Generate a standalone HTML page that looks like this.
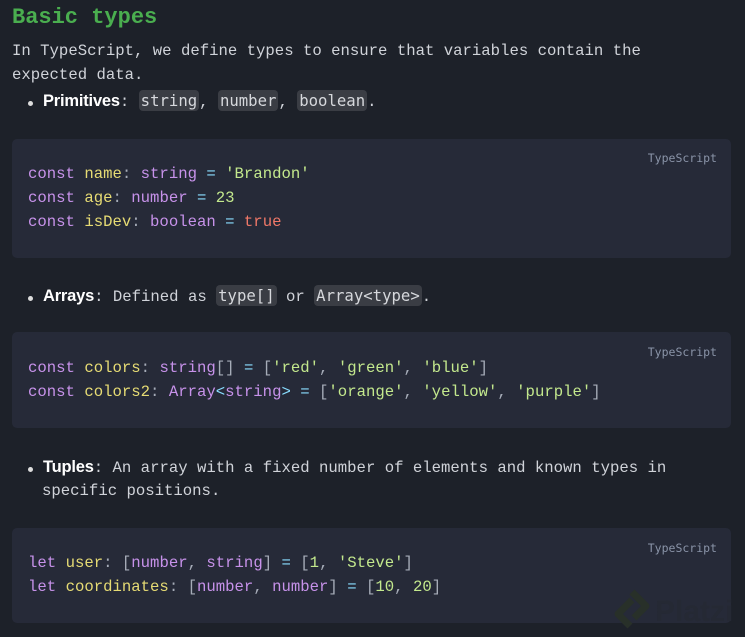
<!DOCTYPE html>
<html><head><style>
*{margin:0;padding:0;box-sizing:border-box}
body{width:745px;height:637px;background:#1d2129;color:#d0d3d9;font-family:"Liberation Mono",monospace;font-size:15.65px;position:relative;overflow:hidden}
.l{position:absolute;white-space:pre;line-height:24px}
h1{position:absolute;left:12px;top:4px;font-size:22px;color:#4aae4f;font-weight:bold;font-family:"Liberation Mono",monospace;line-height:28px}
.blk{position:absolute;left:12px;width:719px;background:#262a38;border-radius:5px}
.lab{position:absolute;right:14px;font-size:11.5px;color:#8a94a8;font-family:"DejaVu Sans Mono",monospace}
b{font-family:"Liberation Sans",sans-serif;font-weight:bold;color:#fff;font-size:16.5px;letter-spacing:-0.2px}
code{background:#3a3d44;border-radius:4px;padding:1px 2px;color:#d6d8dc}
.dot{position:absolute;left:28px;width:5px;height:5px;border-radius:50%;background:#ddd}
.k{color:#c792ea}.v{color:#e6db74}.t{color:#c792ea}.s{color:#c3e88d}.n{color:#c3e88d}.o{color:#89ddff}.r{color:#f07868}.p{color:#a6acb8}
</style></head><body>
<h1>Basic types</h1>
<div class="l" style="left:12px;top:39px">In TypeScript, we define types to ensure that variables contain the</div>
<div class="l" style="left:12px;top:63px">expected data.</div>
<div class="dot" style="top:101px"></div>
<div class="l" style="left:43px;top:89px"><b>Primitives</b>: <code>string</code>, <code>number</code>, <code>boolean</code>.</div>
<div class="blk" style="top:139px;height:119px"><div class="lab" style="top:12px">TypeScript</div></div>
<div class="l" style="left:28px;top:162px"><span class="k">const</span> <span class="v">name</span><span class="p">:</span> <span class="t">string</span> <span class="o">=</span> <span class="s">'Brandon'</span></div>
<div class="l" style="left:28px;top:186px"><span class="k">const</span> <span class="v">age</span><span class="p">:</span> <span class="t">number</span> <span class="o">=</span> <span class="n">23</span></div>
<div class="l" style="left:28px;top:210px"><span class="k">const</span> <span class="v">isDev</span><span class="p">:</span> <span class="t">boolean</span> <span class="o">=</span> <span class="r">true</span></div>
<div class="dot" style="top:296px"></div>
<div class="l" style="left:43px;top:284px"><b>Arrays</b>: Defined as <code>type[]</code> or <code>Array&lt;type&gt;</code>.</div>
<div class="blk" style="top:332px;height:96px"><div class="lab" style="top:13px">TypeScript</div></div>
<div class="l" style="left:28px;top:356px"><span class="k">const</span> <span class="v">colors</span><span class="p">:</span> <span class="t">string</span><span class="p">[]</span> <span class="o">=</span> <span class="p">[</span><span class="s">'red'</span><span class="p">,</span> <span class="s">'green'</span><span class="p">,</span> <span class="s">'blue'</span><span class="p">]</span></div>
<div class="l" style="left:28px;top:380px"><span class="k">const</span> <span class="v">colors2</span><span class="p">:</span> <span class="t">Array</span><span class="o">&lt;</span><span class="t">string</span><span class="o">&gt;</span> <span class="o">=</span> <span class="p">[</span><span class="s">'orange'</span><span class="p">,</span> <span class="s">'yellow'</span><span class="p">,</span> <span class="s">'purple'</span><span class="p">]</span></div>
<div class="dot" style="top:467px"></div>
<div class="l" style="left:43px;top:455px"><b>Tuples</b>: An array with a fixed number of elements and known types in</div>
<div class="l" style="left:42px;top:479px">specific positions.</div>
<div class="blk" style="top:528px;height:95px"><div class="lab" style="top:13px">TypeScript</div></div>
<div class="l" style="left:28px;top:551px"><span class="k">let</span> <span class="v">user</span><span class="p">:</span> <span class="p">[</span><span class="t">number</span><span class="p">,</span> <span class="t">string</span><span class="p">]</span> <span class="o">=</span> <span class="p">[</span><span class="n">1</span><span class="p">,</span> <span class="s">'Steve'</span><span class="p">]</span></div>
<div class="l" style="left:28px;top:575px"><span class="k">let</span> <span class="v">coordinates</span><span class="p">:</span> <span class="p">[</span><span class="t">number</span><span class="p">,</span> <span class="t">number</span><span class="p">]</span> <span class="o">=</span> <span class="p">[</span><span class="n">10</span><span class="p">,</span> <span class="n">20</span><span class="p">]</span></div>
<svg style="position:absolute;left:612px;top:588px" width="40" height="44"><path d="M20 4 L34 18 L22 30 M18 38 L6 26 L20 12" stroke="#283029" stroke-width="7" fill="none" stroke-linejoin="round"/></svg>
<div style="position:absolute;left:655px;top:595px;font-family:'Liberation Sans',sans-serif;font-size:30px;font-weight:bold;color:#252934">Platzi</div>
</body></html>
